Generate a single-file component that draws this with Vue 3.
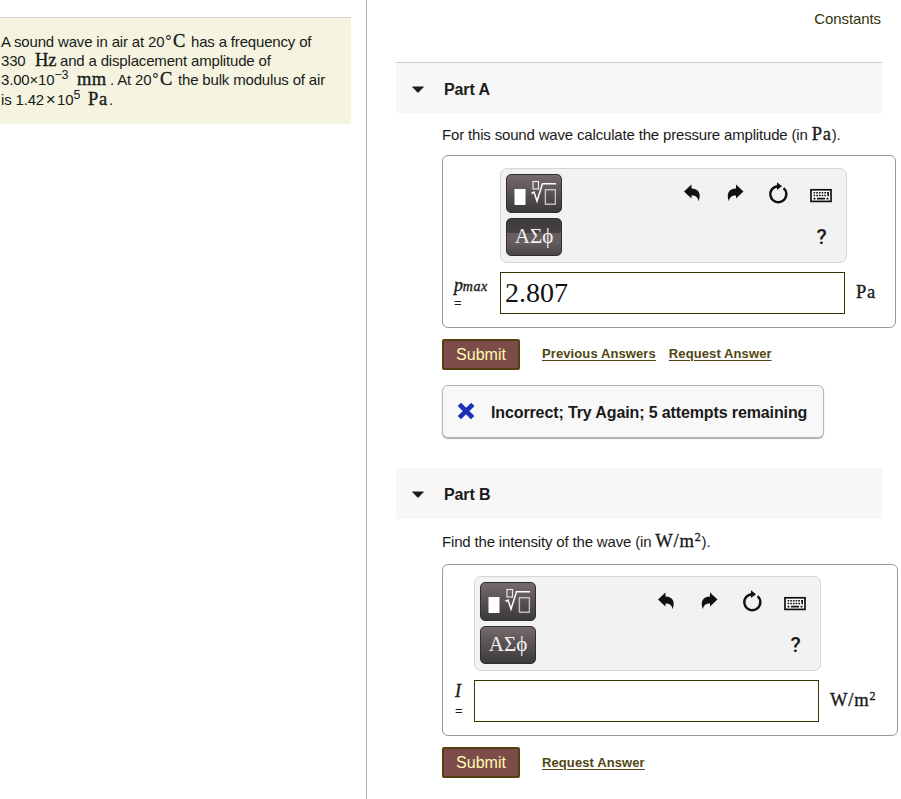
<template>
  <div class="page">
    <!-- PROBLEM TEXT -->
    <aside class="sidebar">
      <div class="problem">
        <p class="line l1"><span class="t1">A sound wave in air at 20</span><span class="deg">°</span><span class="math">C</span><span class="t2">has a frequency of</span></p>
        <p class="line l2"><span class="t1">330</span><span class="math">Hz</span><span class="t2">and a displacement amplitude of</span></p>
        <p class="line l3"><span class="t1">3.00×10<sup>−3</sup></span><span class="math">mm</span><span class="t2">. At 20</span><span class="deg">°</span><span class="math c">C</span><span class="t3">the bulk modulus of air</span></p>
        <p class="line l4"><span class="t1">is 1.42<span class="times">×</span>10<sup>5</sup></span><span class="math">Pa</span><span>.</span></p>
      </div>
    </aside>

    <main class="content">
      <div class="top-bar"><a class="constants">Constants</a></div>

      <section v-for="part in parts" :key="part.id" class="part" :class="'part-' + part.id">
        <header class="part-header">
          <svg class="caret" width="12" height="7" viewBox="0 0 12 7"><path d="M0.6 0.5H11.4Q12 .6 11.5 1.2L7 6Q6 7 5 6L.5 1.2Q0 .6.6.5Z" fill="#1c1c1c" /></svg>
          <h2>{{ part.title }}</h2>
        </header>

        <div class="part-body">
          <p class="prompt"><span class="prompt-text">{{ part.prompt }}</span><span class="math">{{ part.unit }}<sup v-if="part.power">{{ part.power }}</sup></span><span>).</span></p>

          <div class="answer-box">
            <div class="toolbar">
              <div class="templates">
                <button class="tool-btn">
                  <svg width="44" height="28" viewBox="0 0 44 28" fill="none">
                    <rect x="2.5" y="10" width="11" height="16" fill="#fff" />
                    <rect x="21" y="2.5" width="5.5" height="7.5" stroke="#ece6e6" stroke-width="1.2" />
                    <path d="M19.5 14.5L22 13L25 22L30.5 4.7H45" stroke="#fff" stroke-width="1.5" />
                    <rect x="33.4" y="10.7" width="10" height="14.5" stroke="#c9c2c2" stroke-width="1.4" />
                  </svg>
                </button>
                <button class="tool-btn greek">ΑΣϕ</button>
              </div>
              <div class="actions">
                <svg viewBox="0 0 24 24"><path d="M4 9.5L11.5 2.5V6.4C18.5 6.6 21.6 11.5 18.6 19.2C18 15.2 16 13.4 11.5 13.4V16.5Z" fill="#111" /></svg>
                <svg viewBox="0 0 24 24"><path d="M20.5 9.5L13 2.5V6.4C6 6.6 2.9 11.5 5.9 19.2C6.5 15.2 8.5 13.4 13 13.4V16.5Z" fill="#111" /></svg>
                <svg viewBox="0 0 24 24"><path d="M12.5 4.2A8 8 0 1 0 17.6 6.2" fill="none" stroke="#111" stroke-width="2.4" /><path d="M11 .2L16 4.2L11 8Z" fill="#111" /></svg>
                <svg viewBox="0 0 24 24">
                  <rect x="2" y="7.8" width="20" height="11.6" fill="#fff" stroke="#111" stroke-width="1.7" />
                  <path d="M4.5 10.8H19.8M4.5 13.5H18" stroke="#111" stroke-width="1.6" stroke-dasharray="1.7 1" />
                  <path d="M4.5 16.6H6.5M8 16.6H16M17.5 16.6H19.5M19.2 10.2V14.2" stroke="#111" stroke-width="1.6" />
                </svg>
                <span class="help">?</span>
              </div>
            </div>

            <div class="input-row">
              <div class="label"><i>{{ part.symbol }}<span v-if="part.sub" class="sub">{{ part.sub }}</span></i><span class="equals">=</span></div>
              <input v-model="part.answer" class="answer" />
              <span class="unit">{{ part.unit }}<sup v-if="part.power">{{ part.power }}</sup></span>
            </div>
          </div>

          <div class="submit-row">
            <button class="submit">Submit</button>
            <a v-for="link in part.links" :key="link" class="link">{{ link }}</a>
          </div>

          <div v-if="part.feedback" class="feedback">
            <svg width="18" height="18" viewBox="0 0 18 18"><path d="M4 3L14 13M14.2 3L4 13" stroke="#1b2fb8" stroke-width="4.6" stroke-linecap="square" stroke-linejoin="round" /></svg>
            <span>{{ part.feedback }}</span>
          </div>
        </div>
      </section>
    </main>
  </div>
</template>

<script setup>
import { ref } from 'vue'

const parts = ref([
  {
    id: 'a',
    title: 'Part A',
    prompt: 'For this sound wave calculate the pressure amplitude (in',
    symbol: 'p',
    sub: 'max',
    unit: 'Pa',
    answer: '2.807',
    links: ['Previous Answers', 'Request Answer'],
    feedback: 'Incorrect; Try Again; 5 attempts remaining'
  },
  {
    id: 'b',
    title: 'Part B',
    prompt: 'Find the intensity of the wave (in',
    symbol: 'I',
    unit: 'W/m',
    power: '2',
    answer: '',
    links: ['Request Answer']
  }
])
</script>

<style>
body {
  background: #fff;
  overflow: hidden;
}
</style>

<style scoped>
* {
  box-sizing: border-box;
}

.page {
  display: flex;
  width: 901px;
  height: 799px;
  overflow: hidden;
  font-family: "Liberation Sans", Arial, sans-serif;
  font-size: 15px;
  letter-spacing: -0.17px;
  color: #1a1a1a;
}

p, h2 {
  margin: 0;
}

sup {
  line-height: 0;
}

.math, .unit {
  font-family: "Liberation Serif", "Times New Roman", serif;
  font-size: 18.5px;
  letter-spacing: 0.8px;
  -webkit-text-stroke: 0.35px #1a1a1a;
}

/* PROBLEM */
.sidebar {
  width: 367px;
  flex: none;
  padding-top: 17px;
  border-right: 1px solid #b4b4a8;
}

.problem {
  width: 351px;
  height: 107px;
  padding: 14px 0 0 1px;
  background: #f4f4e0;
  border-top: 1px solid #d6d6c8;
}

.line {
  display: flex;
  align-items: baseline;
  height: 19px;
  line-height: 19px;
  white-space: nowrap;
}

.line sup {
  font-size: 12.5px;
  vertical-align: 6px;
}

.deg {
  width: 9px;
  padding-left: 1px;
  font-size: 17px;
  line-height: 0;
}

.l1 .t1 { width: 163px; }
.l1 .math { width: 18px; }
.l2 { height: 18px; line-height: 18px; }
.l2 .t1 { width: 34px; }
.l2 .math { width: 25px; letter-spacing: 0; }
.l3 .t1 { width: 76px; }
.l3 .math { width: 33px; letter-spacing: 0.4px; }
.l3 .t2 { width: 41px; }
.l3 .math.c { width: 18px; }
.l4 .t1 { width: 87px; }
.l4 .math { width: 21px; letter-spacing: 0.6px; }
.l3, .l4 { height: 20px; line-height: 21px; }

.times {
  display: inline-block;
  width: 13px;
  font-size: 17px;
  text-align: center;
  line-height: 0;
}

/* RIGHT COLUMN */
.content {
  width: 534px;
  flex: none;
  padding-left: 29px;
}

.top-bar {
  width: 485px;
  height: 62px;
  padding-top: 10px;
  text-align: right;
}

.constants {
  color: #333309;
  letter-spacing: -0.1px;
  line-height: 18px;
}

.part-header {
  display: flex;
  align-items: center;
  width: 486px;
  height: 51px;
  padding: 2px 0 0 16px;
  background: #f7f7f7;
}

.part-a .part-header {
  border-top: 1px solid #ccc;
}

.part-header h2 {
  margin-left: 20px;
  font-size: 16px;
  letter-spacing: -0.1px;
  line-height: 20px;
}

.part-a h2 {
  padding-top: 1px;
}

.part-body {
  padding-left: 46px;
}

.prompt {
  display: flex;
  align-items: baseline;
  height: 42px;
  padding-top: 10px;
  line-height: 22px;
}

.prompt .math {
  margin-left: 4px;
}

.prompt .math sup, .unit sup {
  font-size: 12px;
  vertical-align: 6px;
}

.answer-box {
  width: 454px;
  height: 173px;
  padding: 12px 0 0 11px;
  border: 1px solid #999;
  border-radius: 6px;
}

.toolbar {
  display: flex;
  justify-content: space-between;
  width: 347px;
  height: 95px;
  margin-left: 46px;
  padding: 5px;
  background: #f2f2f2;
  border: 1px solid #d6d6da;
  border-radius: 7px;
}

.templates {
  display: flex;
  flex-direction: column;
  gap: 5px;
}

.tool-btn {
  display: flex;
  align-items: center;
  justify-content: center;
  width: 56px;
  height: 38.5px;
  padding: 0;
  background: linear-gradient(#756a6c, #3b3939);
  border: 1px solid #332f30;
  border-radius: 5px;
  color: #f5f2f2;
}

.greek {
  font-family: "Liberation Serif", serif;
  font-size: 21px;
}

.part-a .greek {
  background: linear-gradient(#3e3c3c, #464142 38%, #675e60 39%, #655d5f 65%, #4b4546);
}

.actions {
  display: grid;
  grid-template-columns: repeat(4, 24px);
  column-gap: 19px;
  align-content: start;
  margin: 8px 8px 0 0;
}

.actions svg {
  width: 24px;
  height: 24px;
}

.help {
  grid-column: 4;
  margin-top: 19px;
  padding-left: 1px;
  font-family: Roboto, sans-serif;
  font-size: 21px;
  font-weight: 500;
  line-height: 24px;
  text-align: center;
}

.input-row {
  display: flex;
  margin-top: 9px;
}

.label {
  width: 46px;
  flex: none;
  padding-top: 3px;
  font-family: "Liberation Serif", serif;
  font-size: 18px;
  -webkit-text-stroke: 0.35px #1a1a1a;
}

.label i {
  display: block;
  height: 23px;
  line-height: 20px;
}

.sub {
  font-size: 14px;
  letter-spacing: 0.5px;
}

.equals {
  display: block;
  height: 10px;
  font-family: "Liberation Sans", sans-serif;
  font-size: 13px;
  line-height: 9px;
  -webkit-text-stroke: 0;
}

.answer {
  width: 345px;
  height: 42px;
  padding: 0 4px;
  background: #fff;
  border: 1px solid #3a3500;
  border-radius: 0;
  outline: none;
  font-family: "Liberation Serif", serif;
  font-size: 28px;
  color: #111;
}

.unit {
  margin-left: 11px;
  line-height: 41px;
  white-space: nowrap;
}

.submit-row {
  display: flex;
  margin-top: 11px;
}

.submit {
  width: 78px;
  height: 31px;
  margin-right: 22px;
  padding: 0;
  background: #7c4b4a;
  border: 2px solid #54400f;
  border-radius: 2px;
  color: #fffbb0;
  font-family: "Liberation Sans", sans-serif;
  font-size: 16px;
}

.link {
  margin-right: 13px;
  color: #514611;
  font-size: 13px;
  font-weight: bold;
  letter-spacing: 0.1px;
  line-height: 29px;
  text-decoration: underline;
  text-underline-offset: 2px;
}

.feedback {
  display: flex;
  align-items: center;
  width: 382px;
  height: 53px;
  margin-top: 15px;
  padding-left: 14px;
  background: #f8f8f8;
  border: 1px solid #b5b5b5;
  border-radius: 6px;
  box-shadow: 0 1px 1px #aaa;
  font-size: 16px;
  font-weight: bold;
  letter-spacing: -0.12px;
}

.feedback span {
  margin: 2px 0 0 16px;
}

/* PART B */
.part-b {
  margin-top: 30px;
}

.part-b .prompt {
  height: 45px;
  padding-top: 11px;
}

.part-b .answer-box {
  width: 456px;
  height: 172px;
  padding-top: 11px;
}

.part-b .toolbar {
  margin-left: 20px;
}

.part-b .label {
  width: 20px;
  padding-top: 1px;
  padding-left: 1px;
}

.part-b .label i {
  height: 25px;
}

.part-b .link {
  line-height: 31px;
}
</style>
